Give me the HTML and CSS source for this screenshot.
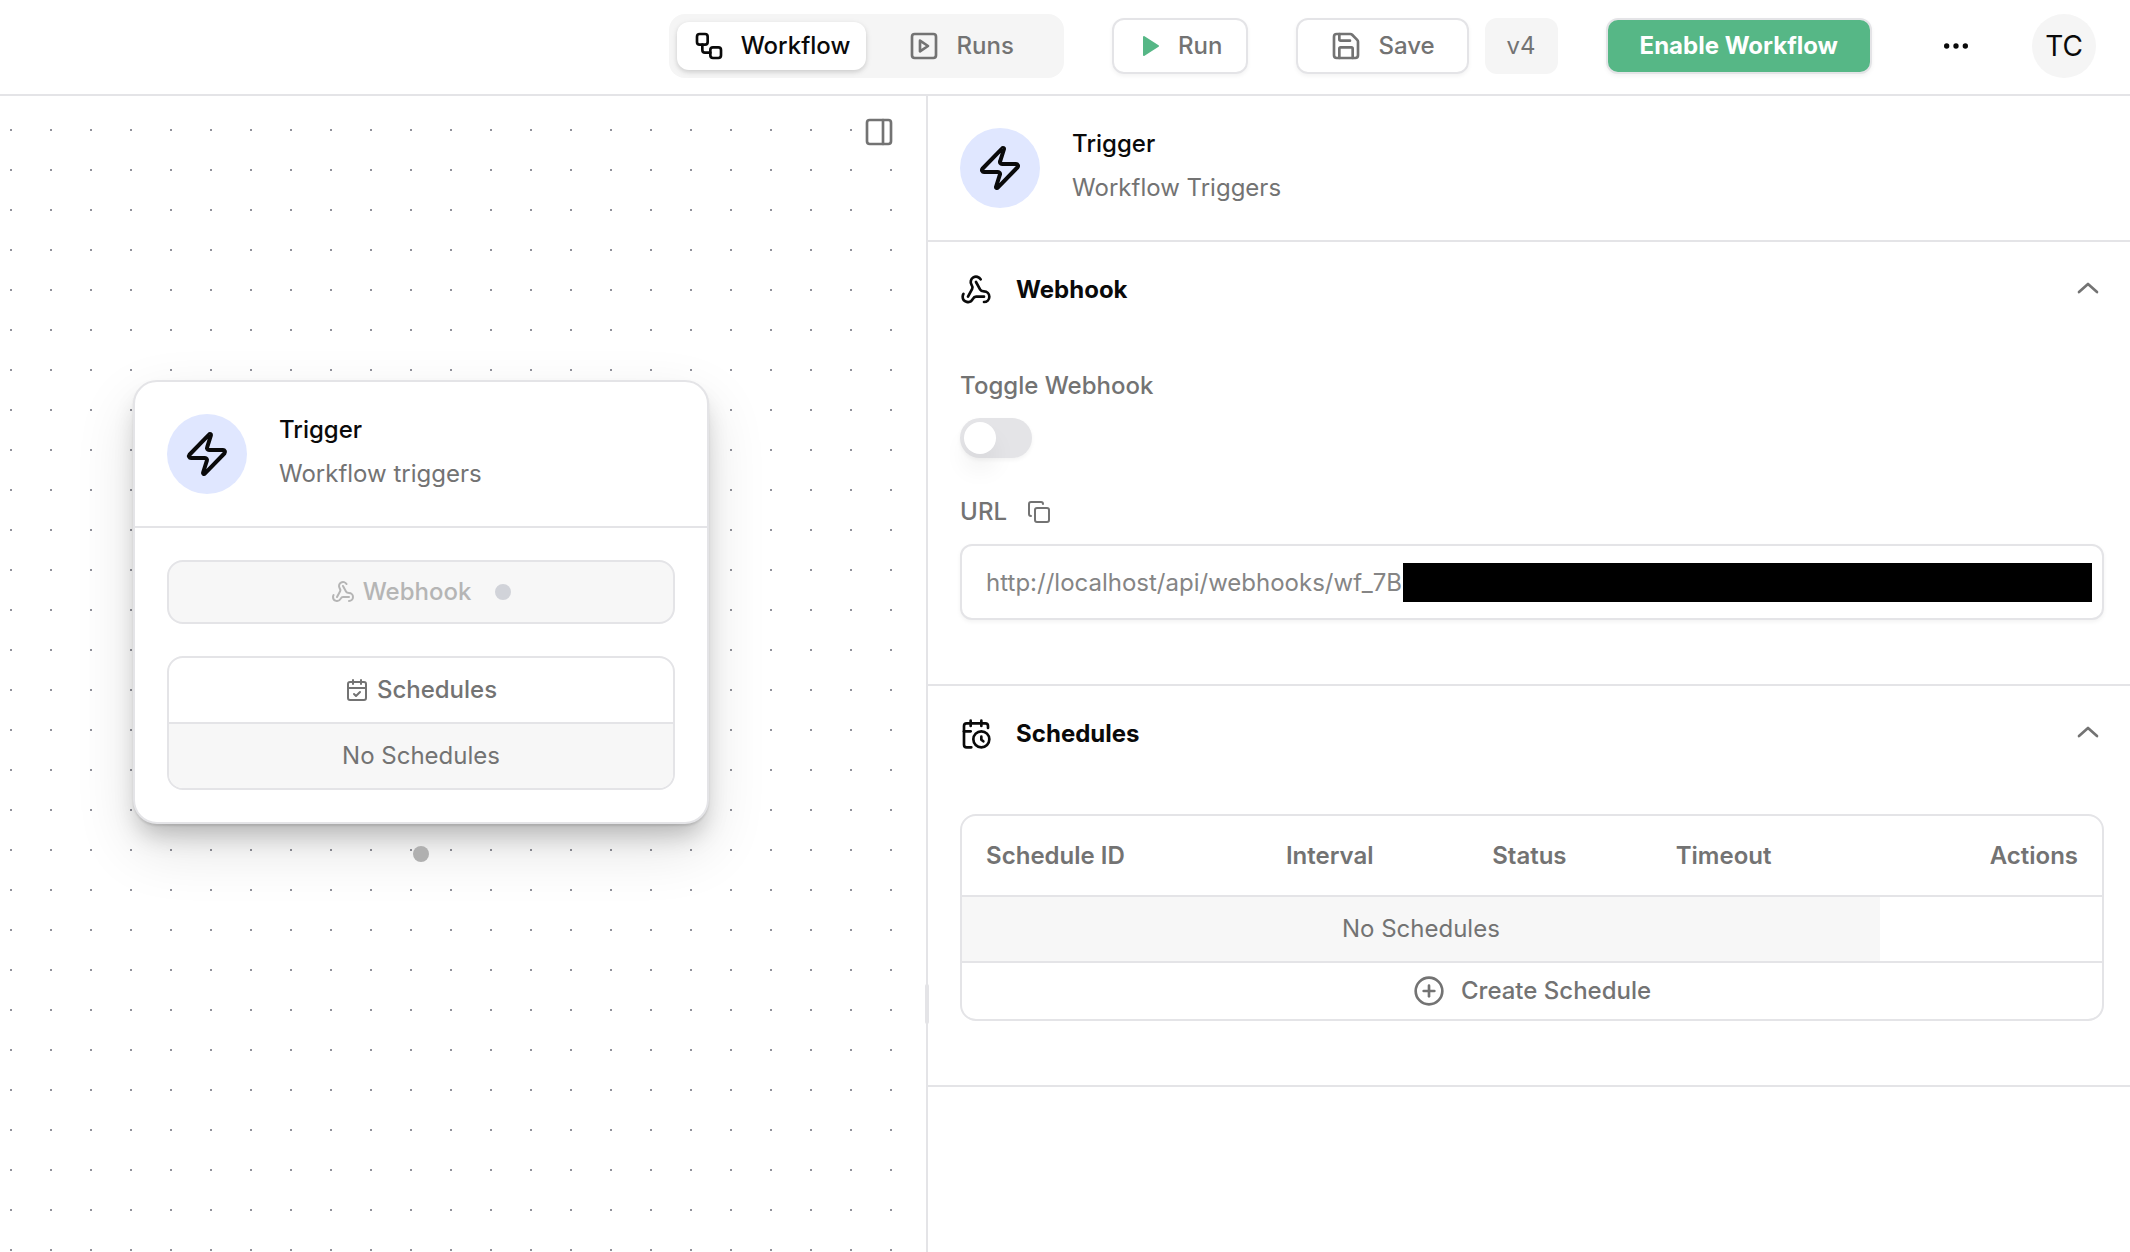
FILE: index.html
```html
<!DOCTYPE html>
<html lang="en">
<head>
    <meta charset="UTF-8" />
    <meta name="viewport" content="width=device-width, initial-scale=1" />
    <title>Workflow Builder</title>
    <link rel="stylesheet" href="styles.css">
</head>
<body>
<!-- shared icons -->
<svg class="sprite" aria-hidden="true">
    <symbol id="icon-workflow" viewBox="0 0 24 24">
        <rect width="8" height="8" x="3" y="3" rx="2" />
        <path d="M7 11v4a2 2 0 0 0 2 2h4" />
        <rect width="8" height="8" x="13" y="13" rx="2" />
    </symbol>
    <symbol id="icon-runs" viewBox="0 0 24 24">
        <rect width="18" height="18" x="3" y="3" rx="2" />
        <path d="m9 8 6 4-6 4Z" />
    </symbol>
    <symbol id="icon-play" viewBox="0 0 24 24">
        <polygon points="6 3 20 12 6 21 6 3" fill="currentColor" />
    </symbol>
    <symbol id="icon-save" viewBox="0 0 24 24">
        <path d="M15.2 3a2 2 0 0 1 1.4.6l3.8 3.8a2 2 0 0 1 .6 1.4V19a2 2 0 0 1-2 2H5a2 2 0 0 1-2-2V5a2 2 0 0 1 2-2z" />
        <path d="M17 21v-7a1 1 0 0 0-1-1H8a1 1 0 0 0-1 1v7" />
        <path d="M7 3v4a1 1 0 0 0 1 1h7" />
    </symbol>
    <symbol id="icon-more" viewBox="0 0 24 24">
        <circle cx="5" cy="12" r="1" />
        <circle cx="12" cy="12" r="1" />
        <circle cx="19" cy="12" r="1" />
    </symbol>
    <symbol id="icon-panel" viewBox="0 0 24 24">
        <rect width="18" height="18" x="3" y="3" rx="2" />
        <path d="M15 3v18" />
    </symbol>
    <symbol id="icon-zap" viewBox="0 0 24 24">
        <path d="M4 14a1 1 0 0 1-.78-1.63l9.9-10.2a.5.5 0 0 1 .86.46l-1.92 6.02A1 1 0 0 0 13 10h7a1 1 0 0 1 .78 1.63l-9.9 10.2a.5.5 0 0 1-.86-.46l1.92-6.02A1 1 0 0 0 11 14z" />
    </symbol>
    <symbol id="icon-webhook" viewBox="0 0 24 24">
        <path d="M18 16.98h-5.99c-1.1 0-1.95.94-2.48 1.9A4 4 0 0 1 2 17c.01-.7.2-1.4.57-2" />
        <path d="m6 17 3.13-5.78c.53-.97.1-2.18-.5-3.1a4 4 0 1 1 6.89-4.06" />
        <path d="m12 6 3.13 5.73C15.66 12.7 16.9 13 18 13a4 4 0 0 1 0 8" />
    </symbol>
    <symbol id="icon-calendar-check" viewBox="0 0 24 24">
        <path d="M8 2v4" />
        <path d="M16 2v4" />
        <rect width="18" height="18" x="3" y="4" rx="2" />
        <path d="M3 10h18" />
        <path d="m9 16 2 2 4-4" />
    </symbol>
    <symbol id="icon-calendar-clock" viewBox="0 0 24 24">
        <path d="M21 7.5V6a2 2 0 0 0-2-2H5a2 2 0 0 0-2 2v14a2 2 0 0 0 2 2h3.5" />
        <path d="M16 2v4" />
        <path d="M8 2v4" />
        <path d="M3 10h5" />
        <path d="M17.5 17.5 16 16.3V14" />
        <circle cx="16" cy="16" r="6" />
    </symbol>
    <symbol id="icon-copy" viewBox="0 0 24 24">
        <rect width="14" height="14" x="8" y="8" rx="2" />
        <path d="M4 16c-1.1 0-2-.9-2-2V4c0-1.1.9-2 2-2h10c1.1 0 2 .9 2 2" />
    </symbol>
    <symbol id="icon-chevron-up" viewBox="0 0 24 24">
        <path d="m5.25 13.5 6.75-6 6.75 6" />
    </symbol>
    <symbol id="icon-plus" viewBox="0 0 24 24">
        <circle cx="12" cy="12" r="10" />
        <path d="M8 12h8" />
        <path d="M12 8v8" />
    </symbol>
</svg>

<header class="topbar">
    <nav class="tabs">
        <button type="button" class="tab active"><svg class="icon"><use href="#icon-workflow" /></svg>Workflow</button>
        <button type="button" class="tab"><svg class="icon"><use href="#icon-runs" /></svg>Runs</button>
    </nav>
    <button type="button" class="btn btn-run"><svg class="icon icon-sm"><use href="#icon-play" /></svg>Run</button>
    <div class="save-group">
        <button type="button" class="btn btn-save"><svg class="icon"><use href="#icon-save" /></svg>Save</button>
        <span class="version">v4</span>
    </div>
    <button type="button" class="btn btn-enable">Enable Workflow</button>
    <div class="user-group">
        <button type="button" class="btn-more" aria-label="More"><svg class="icon"><use href="#icon-more" /></svg></button>
        <span class="avatar">TC</span>
    </div>
</header>

<main class="workspace">
    <section class="canvas">
        <button type="button" class="panel-toggle" aria-label="Toggle panel"><svg class="icon"><use href="#icon-panel" /></svg></button>

        <div class="node">
            <div class="intro">
                <div class="badge"><svg class="icon icon-lg"><use href="#icon-zap" /></svg></div>
                <div class="intro-text">
                    <div class="intro-title">Trigger</div>
                    <div class="intro-sub">Workflow triggers</div>
                </div>
            </div>
            <div class="node-body">
                <div class="node-box node-webhook">
                    <div class="node-label"><svg class="icon icon-sm"><use href="#icon-webhook" /></svg>Webhook</div>
                    <span class="dot"></span>
                </div>
                <div class="node-box">
                    <div class="node-row node-label"><svg class="icon icon-sm"><use href="#icon-calendar-check" /></svg>Schedules</div>
                    <div class="node-row node-empty">No Schedules</div>
                </div>
            </div>
            <span class="node-handle"></span>
        </div>
    </section>

    <aside class="panel">
        <span class="resizer"></span>
        <div class="intro">
            <div class="badge"><svg class="icon icon-lg"><use href="#icon-zap" /></svg></div>
            <div class="intro-text">
                <div class="intro-title">Trigger</div>
                <div class="intro-sub">Workflow Triggers</div>
            </div>
        </div>

        <section class="section">
            <button type="button" class="section-head">
                <svg class="icon"><use href="#icon-webhook" /></svg>
                <span class="section-title">Webhook</span>
                <svg class="icon chevron"><use href="#icon-chevron-up" /></svg>
            </button>
            <div class="section-body">
                <label class="label" for="webhook-toggle">Toggle Webhook</label>
                <input type="checkbox" class="switch" id="webhook-toggle" />
                <div class="label-row">
                    <label class="label" for="webhook-url">URL</label>
                    <button type="button" class="btn-copy" aria-label="Copy URL"><svg class="icon icon-sm"><use href="#icon-copy" /></svg></button>
                </div>
                <div class="url-field">
                    <input type="text" id="webhook-url" value="http://localhost/api/webhooks/wf_7B" readonly />
                    <span class="redacted"></span>
                </div>
            </div>
        </section>

        <section class="section">
            <button type="button" class="section-head">
                <svg class="icon"><use href="#icon-calendar-clock" /></svg>
                <span class="section-title">Schedules</span>
                <svg class="icon chevron"><use href="#icon-chevron-up" /></svg>
            </button>
            <div class="section-body">
                <div class="table-wrap">
                    <table class="schedules">
                        <thead>
                            <tr>
                                <th class="col-id">Schedule ID</th>
                                <th class="col-interval">Interval</th>
                                <th class="col-status">Status</th>
                                <th class="col-timeout">Timeout</th>
                                <th class="col-actions">Actions</th>
                            </tr>
                        </thead>
                        <tbody>
                            <tr>
                                <td class="empty" colspan="4">No Schedules</td>
                                <td></td>
                            </tr>
                        </tbody>
                    </table>
                    <button type="button" class="btn-create"><svg class="icon"><use href="#icon-plus" /></svg>Create Schedule</button>
                </div>
            </div>
        </section>
    </aside>
</main>
</body>
</html>
```

FILE: styles.css
```css
* {
  box-sizing: border-box;
}
body {
  margin: 0;
  height: 100vh;
  display: flex;
  flex-direction: column;
  overflow: hidden;
  font-family: Inter, "Liberation Sans", sans-serif;
  font-optical-sizing: none;
  font-size: 24px;
  line-height: 32px;
  color: #0a0a0a;
  background: #fff;
}
button, input {
  font: inherit;
  color: inherit;
}
button {
  padding: 0;
  border: none;
  background: none;
  cursor: pointer;
}
.sprite {
  display: none;
}
.icon {
  width: 32px;
  height: 32px;
  flex: none;
  fill: none;
  stroke: currentColor;
  stroke-width: 2;
  stroke-linecap: round;
  stroke-linejoin: round;
}
.icon-sm {
  width: 24px;
  height: 24px;
}
.icon-lg {
  width: 48px;
  height: 48px;
}

/* top bar */
.topbar {
  display: flex;
  align-items: center;
  justify-content: flex-end;
  gap: 48px;
  height: 96px;
  padding: 0 34px 2px 0;
  border-bottom: 2px solid #e4e4e7;
}
.tabs {
  display: grid;
  grid-template-columns: 1fr 1fr;
  padding: 8px;
  height: 64px;
  border-radius: 16px;
  background: #f5f5f5;
}
.tab {
  display: flex;
  align-items: center;
  justify-content: center;
  gap: 16px;
  padding: 0 16px;
  border-radius: 12px;
  font-weight: 500;
  color: #737373;
}
.tab.active {
  color: #0a0a0a;
  background: #fff;
  box-shadow: 0 2px 6px rgba(0,0,0,0.1), 0 2px 4px rgba(0,0,0,0.08);
}
.btn {
  display: flex;
  align-items: center;
  gap: 16px;
  height: 56px;
  border: 2px solid #e4e4e7;
  border-radius: 12px;
  font-weight: 500;
  color: #737373;
  box-shadow: 0 2px 4px rgba(0,0,0,0.05);
}
.btn-run {
  padding: 0 24px;
}
.btn-run .icon {
  color: #56b786;
}
.btn-save {
  padding: 0 32px;
}
.btn-enable {
  padding: 0 32px;
  font-weight: 700;
  color: #fff;
  background: #56b786;
}
.save-group {
  display: flex;
  gap: 16px;
}
.version {
  padding: 12px 22px;
  border-radius: 12px;
  color: #737373;
  background: #f5f5f5;
}
.user-group {
  display: flex;
  align-items: center;
  gap: 40px;
}
.btn-more {
  display: flex;
  padding: 20px;
}
.avatar {
  display: flex;
  align-items: center;
  justify-content: center;
  width: 64px;
  height: 64px;
  border-radius: 50%;
  font-size: 28px;
  background: #f5f5f5;
}

/* canvas */
.workspace {
  flex: 1;
  display: flex;
  min-height: 0;
}
.canvas {
  position: relative;
  flex: 0 0 43.48%;
  background-image: radial-gradient(circle, #91919a 1px, transparent 1px);
  background-size: 40px 40px;
  background-position: -9px 14px;
}
.panel-toggle {
  position: absolute;
  top: 20px;
  right: 31px;
  display: flex;
  color: #737373;
}
.intro {
  display: flex;
  gap: 32px;
  padding: 32px;
  border-bottom: 2px solid #e4e4e7;
}
.badge {
  display: flex;
  align-items: center;
  justify-content: center;
  width: 80px;
  height: 80px;
  border-radius: 50%;
  background: #e0e7ff;
}
.intro-text {
  display: flex;
  flex-direction: column;
  gap: 12px;
}
.intro-title {
  font-weight: 500;
}
.intro-sub {
  color: #737373;
}
.node {
  position: absolute;
  left: 133px;
  top: 284px;
  width: 576px;
  border: 2px solid #e4e4e7;
  border-radius: 24px;
  background: #fff;
  box-shadow: 0 2px 2px rgba(0,0,0,0.1), 0 16px 24px -6px rgba(0,0,0,0.22), 0 24px 60px rgba(0,0,0,0.12);
}
.node-body {
  display: flex;
  flex-direction: column;
  gap: 32px;
  padding: 32px;
}
.node-box {
  overflow: hidden;
  border: 2px solid #e4e4e7;
  border-radius: 16px;
  color: #737373;
}
.node-label {
  display: flex;
  align-items: center;
  justify-content: center;
  gap: 8px;
  font-weight: 500;
}
.node-webhook {
  display: flex;
  align-items: center;
  justify-content: center;
  gap: 24px;
  height: 64px;
  color: #b5b5b5;
  background: #f7f7f7;
}
.dot {
  width: 16px;
  height: 16px;
  border-radius: 50%;
  background: #d1d3d9;
}
.node-row {
  padding: 16px;
}
.node-empty {
  border-top: 2px solid #e4e4e7;
  text-align: center;
  background: #f7f7f7;
}
.node-handle {
  position: absolute;
  left: 50%;
  bottom: -40px;
  width: 16px;
  height: 16px;
  margin-left: -8px;
  border-radius: 50%;
  background: #b0b0b0;
}

/* side panel */
.panel {
  position: relative;
  flex: 1;
  min-width: 0;
  border-left: 2px solid #e4e4e7;
}
.resizer {
  position: absolute;
  left: -3px;
  bottom: 228px;
  width: 4px;
  height: 40px;
  border-radius: 2px;
  background: #e4e4e7;
}
.section {
  border-bottom: 2px solid #e4e4e7;
}
.section-head {
  display: flex;
  align-items: center;
  gap: 24px;
  width: 100%;
  padding: 32px 26px 32px 32px;
}
.section-title {
  flex: 1;
  text-align: left;
  font-weight: 700;
}
.chevron {
  color: #737373;
}
.section-body {
  display: flex;
  flex-direction: column;
  padding: 32px 26px 64px 32px;
}
.label {
  font-weight: 500;
  color: #737373;
}
.switch {
  appearance: none;
  width: 72px;
  height: 40px;
  margin: 16px 0 38px;
  padding: 4px;
  border-radius: 20px;
  background: #e4e4e7;
  box-shadow: 0 2px 4px rgba(0,0,0,0.05);
  cursor: pointer;
}
.switch::before {
  content: "";
  display: block;
  width: 32px;
  height: 32px;
  border-radius: 50%;
  background: #fff;
  box-shadow: 0 16px 24px rgba(0,0,0,0.06);
}
.switch:checked {
  background: #56b786;
}
.switch:checked::before {
  margin-left: 32px;
}
.label-row {
  display: flex;
  align-items: center;
  gap: 20px;
  margin-bottom: 16px;
}
.btn-copy {
  display: flex;
  color: #737373;
}
.url-field {
  position: relative;
}
.url-field input {
  display: block;
  width: 100%;
  height: 76px;
  padding: 0 24px;
  border: 2px solid #e4e4e7;
  border-radius: 12px;
  outline: none;
  color: #858585;
  background: #fff;
  box-shadow: 0 2px 4px rgba(0,0,0,0.05);
}
.redacted {
  position: absolute;
  left: 443px;
  right: 12px;
  top: 19px;
  height: 39px;
  background: #000;
}

/* schedules table */
.table-wrap {
  overflow: hidden;
  border: 2px solid #e4e4e7;
  border-radius: 16px;
  color: #737373;
}
.schedules {
  width: 100%;
  table-layout: fixed;
  border-collapse: separate;
  border-spacing: 0;
}
.schedules th, .schedules td {
  padding: 0 24px;
  border-bottom: 2px solid #e4e4e7;
}
.schedules th {
  height: 81px;
  font-weight: 600;
  text-align: left;
}
.schedules td {
  height: 66px;
}
.col-id {
  width: 26.3%;
}
.col-interval {
  width: 18.1%;
}
.col-status {
  width: 16.1%;
}
.col-timeout {
  width: 20%;
}
.schedules .col-actions {
  text-align: right;
}
.schedules .empty {
  text-align: center;
  background: #f7f7f7;
}
.btn-create {
  display: flex;
  align-items: center;
  justify-content: center;
  gap: 16px;
  width: 100%;
  height: 56px;
  font-weight: 500;
}
```
